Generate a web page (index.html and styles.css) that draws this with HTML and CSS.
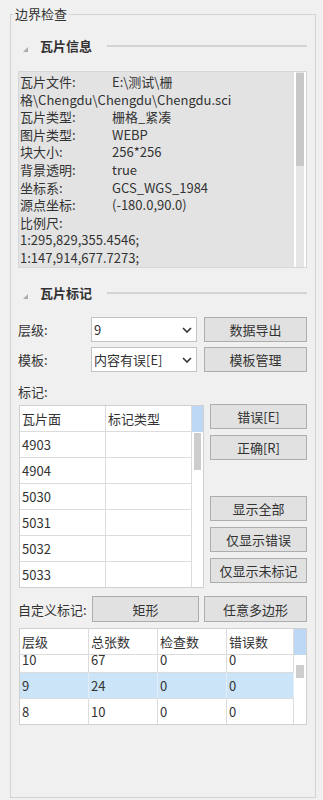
FILE: index.html
```html
<!DOCTYPE html>
<html lang="zh-CN">
<head>
<meta charset="utf-8">
<title>边界检查</title>
<link rel="stylesheet" href="styles.css">
</head>
<body>
<fieldset class="group">
  <legend class="group-title">边界检查</legend>
  <div class="group-body">
    <div class="section-head first">
      <span class="tri"></span><span class="section-title">瓦片信息</span><span class="section-rule"></span>
    </div>
    <div class="info">
      <div class="info-text">
        <div class="info-line"><span class="k">瓦片文件:</span>E:\测试\栅</div>
        <div class="info-line">格\Chengdu\Chengdu\Chengdu.sci</div>
        <div class="info-line"><span class="k">瓦片类型:</span>栅格_紧凑</div>
        <div class="info-line"><span class="k">图片类型:</span>WEBP</div>
        <div class="info-line"><span class="k">块大小:</span>256*256</div>
        <div class="info-line"><span class="k">背景透明:</span>true</div>
        <div class="info-line"><span class="k">坐标系:</span>GCS_WGS_1984</div>
        <div class="info-line"><span class="k">源点坐标:</span>(-180.0,90.0)</div>
        <div class="info-line">比例尺:</div>
        <div class="info-line">1:295,829,355.4546;</div>
        <div class="info-line">1:147,914,677.7273;</div>
      </div>
      <div class="info-scroll"><div class="info-thumb"></div></div>
    </div>

    <div class="section-head second">
      <span class="tri"></span><span class="section-title">瓦片标记</span><span class="section-rule"></span>
    </div>

    <div class="form-row first">
      <span class="lbl">层级:</span>
      <div class="combo"><span>9</span><svg class="chev" width="10" height="6" viewBox="0 0 10 6"><polyline points="1,1 5,5 9,1" fill="none" stroke="#333" stroke-width="1.6"/></svg></div>
      <div class="btn">数据导出</div>
    </div>
    <div class="form-row">
      <span class="lbl">模板:</span>
      <div class="combo"><span>内容有误[E]</span><svg class="chev" width="10" height="6" viewBox="0 0 10 6"><polyline points="1,1 5,5 9,1" fill="none" stroke="#333" stroke-width="1.6"/></svg></div>
      <div class="btn">模板管理</div>
    </div>

    <div class="marks-label">标记:</div>

    <div class="marks-area">
      <div class="grid marks">
        <div class="grid-main">
          <div class="grid-row head"><div class="cell m1">瓦片面</div><div class="cell m2">标记类型</div></div>
          <div class="grid-row"><div class="cell m1">4903</div><div class="cell m2"></div></div>
          <div class="grid-row"><div class="cell m1">4904</div><div class="cell m2"></div></div>
          <div class="grid-row"><div class="cell m1">5030</div><div class="cell m2"></div></div>
          <div class="grid-row"><div class="cell m1">5031</div><div class="cell m2"></div></div>
          <div class="grid-row"><div class="cell m1">5032</div><div class="cell m2"></div></div>
          <div class="grid-row last"><div class="cell m1">5033</div><div class="cell m2"></div></div>
        </div>
        <div class="vscroll marks-scroll"><div class="vs-head"></div><div class="vs-thumb marks-thumb"></div></div>
      </div>
      <div class="side-buttons">
        <div class="btn side">错误[E]</div>
        <div class="btn side">正确[R]</div>
        <div class="btn side spaced">显示全部</div>
        <div class="btn side">仅显示错误</div>
        <div class="btn side">仅显示未标记</div>
      </div>
    </div>

    <div class="custom-row">
      <span class="custom-lbl">自定义标记:</span>
      <div class="btn rect">矩形</div>
      <div class="btn poly">任意多边形</div>
    </div>

    <div class="grid levels">
      <div class="grid-main">
        <div class="grid-row head"><div class="cell l1">层级</div><div class="cell l2">总张数</div><div class="cell l3">检查数</div><div class="cell l4">错误数</div></div>
        <div class="levels-body">
          <div class="grid-row scrolled"><div class="cell l1">10</div><div class="cell l2">67</div><div class="cell l3">0</div><div class="cell l4">0</div></div>
          <div class="grid-row selected"><div class="cell l1">9</div><div class="cell l2">24</div><div class="cell l3">0</div><div class="cell l4">0</div></div>
          <div class="grid-row last"><div class="cell l1">8</div><div class="cell l2">10</div><div class="cell l3">0</div><div class="cell l4">0</div></div>
        </div>
      </div>
      <div class="vscroll levels-scroll"><div class="vs-head"></div><div class="vs-thumb levels-thumb"></div></div>
    </div>
  </div>
</fieldset>
</body>
</html>
```

FILE: styles.css
```css
* { box-sizing: border-box; }
html, body { margin: 0; padding: 0; }
body {
  width: 323px;
  height: 800px;
  overflow: hidden;
  background: #f0f0f0;
  font-family: "Noto Sans CJK SC", "Microsoft YaHei", sans-serif;
  font-size: 13px;
  color: #333;
}

.group {
  margin: 6px 7px 0 10px;
  padding: 0;
  height: 792px;
  min-width: 0;
  border: 1px solid #d3d3d3;
}
.group-title {
  margin-left: 2px;
  padding: 0 2px;
  line-height: 16px;
  color: #333;
}
.group-body {
  padding: 0 8px 0 7px;
  display: flex;
  flex-direction: column;
}

.section-head {
  display: flex;
  align-items: center;
  height: 18px;
  padding-left: 5px;
}
.section-head.first { margin-top: 15px; }
.section-head.second { margin-top: 16px; }
.tri {
  width: 0;
  height: 0;
  border-left: 5px solid transparent;
  border-bottom: 5px solid #ababab;
  margin-top: 6px;
}
.section-title {
  margin-left: 12px;
  font-weight: bold;
  line-height: 18px;
  color: #333;
}
.section-rule {
  flex: 1;
  height: 2px;
  margin-left: 15px;
  background: #d4d4d4;
}

.info {
  display: flex;
  height: 197px;
  margin-top: 16px;
  background: #e3e3e3;
  border: 1px solid #d6d6d6;
  overflow: hidden;
}
.info-text {
  flex: 1;
  padding: 1px 0 0 1px;
  line-height: 17.6px;
  white-space: nowrap;
  overflow: hidden;
  color: #333;
}
.k { display: inline-block; width: 92px; }
.info-scroll {
  width: 12px;
  border-left: 2px solid #fff;
  border-right: 2px solid #fff;
  background: #e6e6e6;
}
.info-thumb {
  height: 93px;
  margin-top: 1px;
  background: #c8c8c8;
}

.form-row {
  display: flex;
  align-items: center;
  height: 25px;
  margin-top: 5px;
}
.form-row.first { margin-top: 15px; }
.lbl { width: 73px; }
.combo {
  width: 106px;
  height: 25px;
  display: flex;
  align-items: center;
  justify-content: space-between;
  padding: 0 4px 0 2px;
  background: #fff;
  border: 1px solid #c3c3c3;
}
.btn {
  display: flex;
  align-items: center;
  justify-content: center;
  height: 25px;
  background: #e1e1e1;
  border: 1px solid #adadad;
  color: #333;
}
.form-row .btn { flex: 1; margin-left: 7px; }

.marks-label {
  margin-top: 11px;
  line-height: 18px;
}

.marks-area {
  display: flex;
  margin-top: 4px;
}

.grid {
  display: flex;
  background: #fff;
  border: 1px solid #d0d0d0;
}
.grid-main { display: flex; flex-direction: column; }
.grid-row {
  display: flex;
  height: 26px;
  border-bottom: 1px solid #dcdcdc;
}
.grid-row.last { border-bottom: none; height: 25px; }
.cell {
  padding-left: 2px;
  line-height: 25px;
  border-right: 1px solid #dcdcdc;
  white-space: nowrap;
  overflow: hidden;
}

.marks { width: 185px; margin-left: 1px; height: 183px; }
.m1, .m2 { width: 86px; }

.vscroll {
  display: flex;
  flex-direction: column;
  background: #fff;
}
.vs-head { height: 26px; background: #bcd8f4; }
.vs-thumb { background: #cdcdcd; }
.marks-scroll { width: 11px; }
.marks-thumb { width: 7px; height: 37px; margin: 1px 0 0 2px; }

.side-buttons {
  display: flex;
  flex-direction: column;
  width: 97px;
  margin-left: 6px;
  margin-top: -1px;
}
.btn.side { margin-bottom: 6px; }
.btn.spaced { margin-top: 30px; }

.custom-row {
  display: flex;
  align-items: center;
  height: 26px;
  margin-top: 7px;
}
.custom-lbl { width: 74px; white-space: nowrap; }
.btn.rect { width: 107px; height: 26px; }
.btn.poly { flex: 1; height: 26px; margin-left: 5px; }

.levels { width: 288px; margin-left: 1px; margin-top: 6px; height: 97px; }
.l1, .l2, .l3 { width: 69px; }
.l4 { width: 67px; }
.levels-body { height: 69px; overflow: hidden; }
.grid-row.scrolled { margin-top: -8px; }
.grid-row.selected { background: #cce4f7; }
.grid-row.selected .cell { border-right-color: #e4eef8; }
.levels-scroll { width: 12px; }
.levels-thumb { width: 8px; height: 13px; margin: 10px 0 0 2px; }
```
